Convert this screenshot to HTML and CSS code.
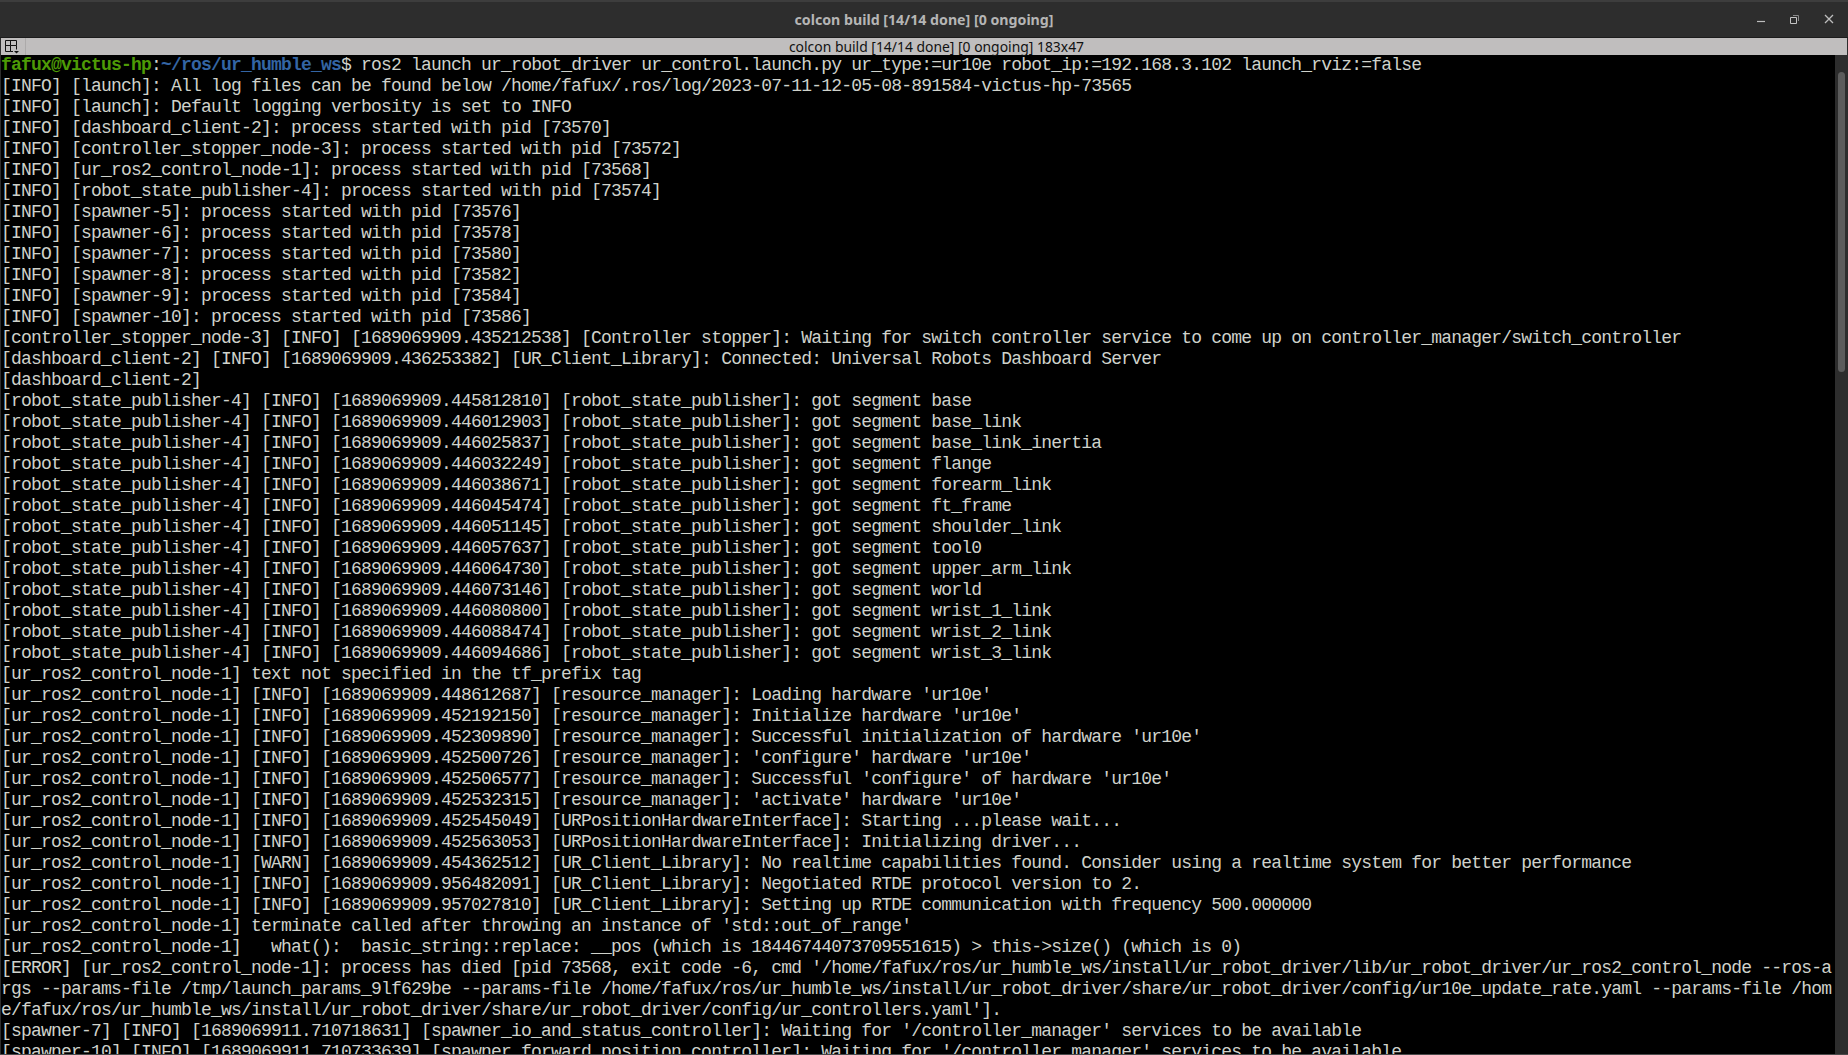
FILE: index.html
```html
<!DOCTYPE html>
<html lang="en">
<head>
<meta charset="utf-8">
<title>colcon build [14/14 done] [0 ongoing]</title>
<link rel="stylesheet" href="styles.css">
</head>
<body>
<div class="window">
  <header class="titlebar">
    <div class="title">colcon build [14/14 done] [0 ongoing]</div>
    <div class="controls">
      <svg class="ctl" width="10" height="10" viewBox="0 0 10 10"><path d="M1 7.5H9" stroke="#bdbdbd" stroke-width="1.2" fill="none"/></svg>
      <svg class="ctl" width="10" height="10" viewBox="0 0 10 10"><path d="M0.5 3.5H6.5V9.5H0.5Z" stroke="#c4c4c4" stroke-width="1" fill="none"/><path d="M3 1.5H8.5V7" stroke="#8a8a8a" stroke-width="1" fill="none"/></svg>
      <svg class="ctl" width="10" height="10" viewBox="0 0 10 10"><path d="M1 1L9 9M9 1L1 9" stroke="#bdbdbd" stroke-width="1.3" fill="none"/></svg>
    </div>
  </header>
  <div class="tabbar">
    <div class="tabicon">
      <svg width="14" height="14" viewBox="0 0 14 14"><path d="M0.5 0.5H11.5V5.5H5.5V11.5H0.5ZM5.5 0.5V5.5H0.5M11.5 5.5V9.5M5.5 11.5H8" stroke="#111" stroke-width="1" fill="none"/><path d="M9 11H14L11.5 13.5Z" fill="#111"/></svg>
    </div>
    <div class="tabtitle">colcon build [14/14 done] [0 ongoing] 183x47</div>
  </div>
  <main class="terminal">
    <div class="screen">
<div class="row"><span class="green">fafux@victus-hp</span>:<span class="blue">~/ros/ur_humble_ws</span>$ ros2 launch ur_robot_driver ur_control.launch.py ur_type:=ur10e robot_ip:=192.168.3.102 launch_rviz:=false</div>
<div class="row">[INFO] [launch]: All log files can be found below /home/fafux/.ros/log/2023-07-11-12-05-08-891584-victus-hp-73565</div>
<div class="row">[INFO] [launch]: Default logging verbosity is set to INFO</div>
<div class="row">[INFO] [dashboard_client-2]: process started with pid [73570]</div>
<div class="row">[INFO] [controller_stopper_node-3]: process started with pid [73572]</div>
<div class="row">[INFO] [ur_ros2_control_node-1]: process started with pid [73568]</div>
<div class="row">[INFO] [robot_state_publisher-4]: process started with pid [73574]</div>
<div class="row">[INFO] [spawner-5]: process started with pid [73576]</div>
<div class="row">[INFO] [spawner-6]: process started with pid [73578]</div>
<div class="row">[INFO] [spawner-7]: process started with pid [73580]</div>
<div class="row">[INFO] [spawner-8]: process started with pid [73582]</div>
<div class="row">[INFO] [spawner-9]: process started with pid [73584]</div>
<div class="row">[INFO] [spawner-10]: process started with pid [73586]</div>
<div class="row">[controller_stopper_node-3] [INFO] [1689069909.435212538] [Controller stopper]: Waiting for switch controller service to come up on controller_manager/switch_controller</div>
<div class="row">[dashboard_client-2] [INFO] [1689069909.436253382] [UR_Client_Library]: Connected: Universal Robots Dashboard Server</div>
<div class="row">[dashboard_client-2] </div>
<div class="row">[robot_state_publisher-4] [INFO] [1689069909.445812810] [robot_state_publisher]: got segment base</div>
<div class="row">[robot_state_publisher-4] [INFO] [1689069909.446012903] [robot_state_publisher]: got segment base_link</div>
<div class="row">[robot_state_publisher-4] [INFO] [1689069909.446025837] [robot_state_publisher]: got segment base_link_inertia</div>
<div class="row">[robot_state_publisher-4] [INFO] [1689069909.446032249] [robot_state_publisher]: got segment flange</div>
<div class="row">[robot_state_publisher-4] [INFO] [1689069909.446038671] [robot_state_publisher]: got segment forearm_link</div>
<div class="row">[robot_state_publisher-4] [INFO] [1689069909.446045474] [robot_state_publisher]: got segment ft_frame</div>
<div class="row">[robot_state_publisher-4] [INFO] [1689069909.446051145] [robot_state_publisher]: got segment shoulder_link</div>
<div class="row">[robot_state_publisher-4] [INFO] [1689069909.446057637] [robot_state_publisher]: got segment tool0</div>
<div class="row">[robot_state_publisher-4] [INFO] [1689069909.446064730] [robot_state_publisher]: got segment upper_arm_link</div>
<div class="row">[robot_state_publisher-4] [INFO] [1689069909.446073146] [robot_state_publisher]: got segment world</div>
<div class="row">[robot_state_publisher-4] [INFO] [1689069909.446080800] [robot_state_publisher]: got segment wrist_1_link</div>
<div class="row">[robot_state_publisher-4] [INFO] [1689069909.446088474] [robot_state_publisher]: got segment wrist_2_link</div>
<div class="row">[robot_state_publisher-4] [INFO] [1689069909.446094686] [robot_state_publisher]: got segment wrist_3_link</div>
<div class="row">[ur_ros2_control_node-1] text not specified in the tf_prefix tag</div>
<div class="row">[ur_ros2_control_node-1] [INFO] [1689069909.448612687] [resource_manager]: Loading hardware 'ur10e'</div>
<div class="row">[ur_ros2_control_node-1] [INFO] [1689069909.452192150] [resource_manager]: Initialize hardware 'ur10e'</div>
<div class="row">[ur_ros2_control_node-1] [INFO] [1689069909.452309890] [resource_manager]: Successful initialization of hardware 'ur10e'</div>
<div class="row">[ur_ros2_control_node-1] [INFO] [1689069909.452500726] [resource_manager]: 'configure' hardware 'ur10e'</div>
<div class="row">[ur_ros2_control_node-1] [INFO] [1689069909.452506577] [resource_manager]: Successful 'configure' of hardware 'ur10e'</div>
<div class="row">[ur_ros2_control_node-1] [INFO] [1689069909.452532315] [resource_manager]: 'activate' hardware 'ur10e'</div>
<div class="row">[ur_ros2_control_node-1] [INFO] [1689069909.452545049] [URPositionHardwareInterface]: Starting ...please wait...</div>
<div class="row">[ur_ros2_control_node-1] [INFO] [1689069909.452563053] [URPositionHardwareInterface]: Initializing driver...</div>
<div class="row">[ur_ros2_control_node-1] [WARN] [1689069909.454362512] [UR_Client_Library]: No realtime capabilities found. Consider using a realtime system for better performance</div>
<div class="row">[ur_ros2_control_node-1] [INFO] [1689069909.956482091] [UR_Client_Library]: Negotiated RTDE protocol version to 2.</div>
<div class="row">[ur_ros2_control_node-1] [INFO] [1689069909.957027810] [UR_Client_Library]: Setting up RTDE communication with frequency 500.000000</div>
<div class="row">[ur_ros2_control_node-1] terminate called after throwing an instance of 'std::out_of_range'</div>
<div class="row">[ur_ros2_control_node-1]   what():  basic_string::replace: __pos (which is 18446744073709551615) &gt; this-&gt;size() (which is 0)</div>
<div class="row">[ERROR] [ur_ros2_control_node-1]: process has died [pid 73568, exit code -6, cmd '/home/fafux/ros/ur_humble_ws/install/ur_robot_driver/lib/ur_robot_driver/ur_ros2_control_node --ros-a</div>
<div class="row">rgs --params-file /tmp/launch_params_9lf629be --params-file /home/fafux/ros/ur_humble_ws/install/ur_robot_driver/share/ur_robot_driver/config/ur10e_update_rate.yaml --params-file /hom</div>
<div class="row">e/fafux/ros/ur_humble_ws/install/ur_robot_driver/share/ur_robot_driver/config/ur_controllers.yaml'].</div>
<div class="row">[spawner-7] [INFO] [1689069911.710718631] [spawner_io_and_status_controller]: Waiting for '/controller_manager' services to be available</div>
<div class="row">[spawner-10] [INFO] [1689069911.710733639] [spawner_forward_position_controller]: Waiting for '/controller_manager' services to be available</div>
    </div>
    <div class="scrollbar"><div class="thumb"></div></div>
  </main>
</div>
</body>
</html>
```
FILE: styles.css
```css
* { box-sizing: border-box; }
html, body { margin: 0; padding: 0; height: 100%; background: #2d2d2d; overflow: hidden; }
.window { display: flex; flex-direction: column; width: 1848px; height: 1055px; background: #2d2d2d; border-bottom: 1px solid #4a4a4a; }
.titlebar {
  flex: 0 0 38px;
  display: grid;
  grid-template-columns: 1fr;
  position: relative;
  background: #2d2d2d;
  border-top: 2px solid #3d3d3d;
  border-bottom: 1px solid #1c1c1c;
  align-items: center;
  justify-items: center;
}
.title {
  font-family: "Noto Sans", "Open Sans", sans-serif;
  font-weight: 700;
  font-size: 14.2px;
  color: #b5b5b5;
}
.controls {
  position: absolute;
  right: 14px;
  top: 12px;
  display: flex;
  gap: 24px;
}
.ctl { display: block; }
.tabbar {
  flex: 0 0 17px;
  display: flex;
  background: #c0bebe;
  margin-right: 1px;
  margin-left: 1px;
  position: relative;
  justify-content: center;
  align-items: center;
}
.tabicon {
  position: absolute;
  left: 0;
  top: 0;
  height: 17px;
  width: 25px;
  padding: 2px 0 0 4px;
  border-right: 1px solid #acaaaa;
}
.tabicon svg { display: block; }
.tabtitle {
  font-family: "Noto Sans", "Open Sans", sans-serif;
  font-size: 13.9px;
  line-height: 17px;
  color: #111;
  padding-left: 25px;
}
.terminal {
  flex: 1 1 auto;
  min-height: 0;
  display: flex;
  background: #000;
  margin-left: 1px;
  margin-right: 1px;
}
.screen {
  flex: 0 0 1834px;
  overflow: hidden;
  background: #000;
  color: #cfd2cb;
  font-family: "Liberation Mono", monospace;
  font-size: 18px;
  letter-spacing: -0.8px;
  line-height: 21px;
}
.row { height: 21px; white-space: pre; }
.green { color: #4e9a06; font-weight: 700; }
.blue { color: #3465a4; font-weight: 700; }
.scrollbar { flex: 1 1 auto; background: #2d2d2d; padding: 17px 2px 0 3px; }
.thumb { height: 300px; border-radius: 4px; background: #5c5c5c; }
```
